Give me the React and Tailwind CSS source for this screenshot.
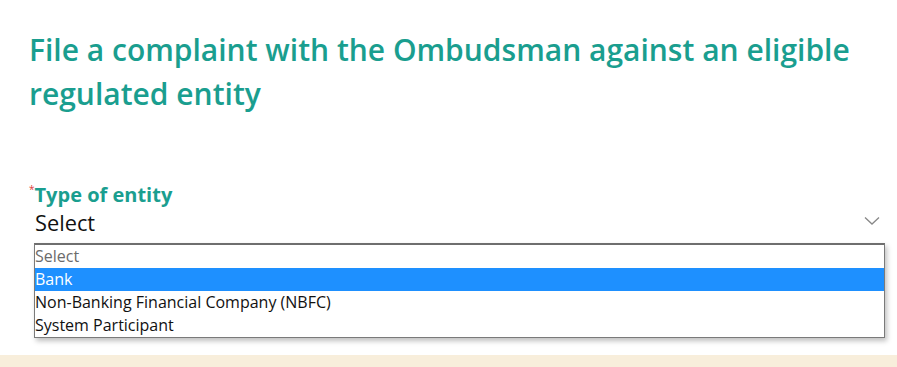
export default function App() {
  const font = { fontFamily: '"Open Sans", sans-serif' };
  return (
    <div className="w-[897px] h-[367px] bg-white flex flex-col overflow-hidden" style={font}>
      <div className="flex-1 pl-[29px] pr-[13px]">
        <h1 className="mt-[28px] text-[30px] leading-[44px] font-semibold text-[#1a9e8f]">
          File a complaint with the Ombudsman against an eligible regulated entity
        </h1>
        <div className="mt-[67px] relative">
          <div className="flex items-start h-[26px]">
            <span className="text-[#e03a3a] text-[10px] leading-[10px] mt-[1px]">*</span>
            <span className="text-[20px] leading-[24px] font-bold text-[#1a9e8f]">Type of entity</span>
          </div>
          <div className="flex items-center justify-between pl-[6px] pr-[4px] h-[28px]">
            <span className="text-[21.8px] leading-[28px] text-[#111]">Select</span>
            <svg width="16" height="10" viewBox="0 0 16 10" className="mt-[-4px]">
              <path d="M1 1.5 L8 8 L15 1.5" fill="none" stroke="#888" strokeWidth="1.3" />
            </svg>
          </div>
          <div className="ml-[5px] w-[851px] mt-[6px] bg-white border border-[#7a7a7a] border-t-2 border-t-[#6e6e6e] shadow-[2px_3px_5px_rgba(0,0,0,0.25)] text-[16px] leading-[23px] text-[#111]">
            <div className="text-[#6b6b6b]">Select</div>
            <div className="bg-[#1e90ff] text-white">Bank</div>
            <div>Non-Banking Financial Company (NBFC)</div>
            <div>System Participant</div>
          </div>
        </div>
      </div>
      <div className="h-[12px] bg-[#f8eedb]" />
    </div>
  );
}
